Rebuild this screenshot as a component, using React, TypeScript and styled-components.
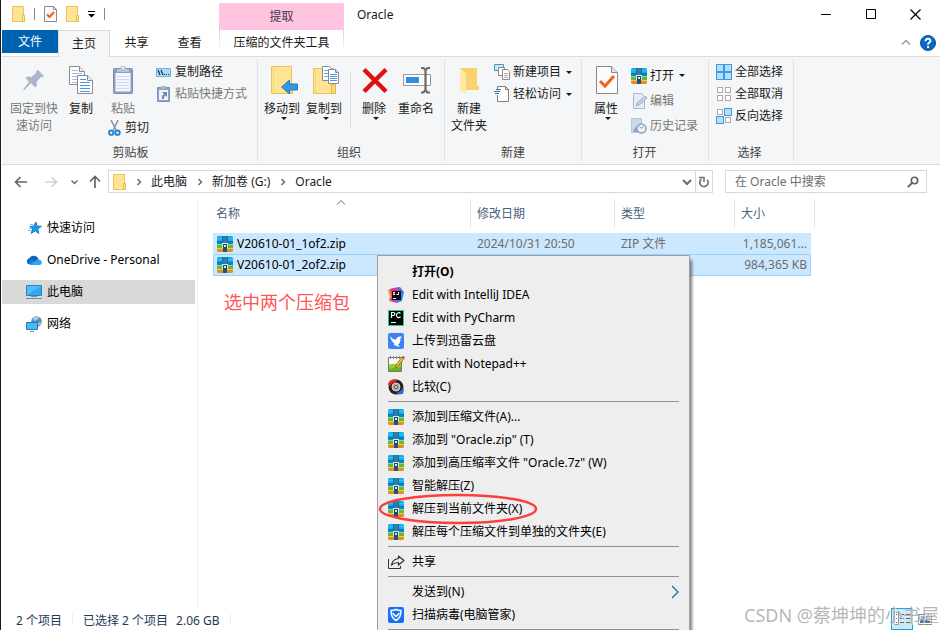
import React from "react";
import styled, { createGlobalStyle, css } from "styled-components";

const GlobalStyle = createGlobalStyle`
  * { box-sizing: border-box; }
  html, body { margin: 0; height: 100%; overflow: hidden; }
  body, button, input, table {
    font-family: "Noto Sans", "Noto Sans CJK SC", sans-serif;
    font-size: 12px;
    line-height: 16px;
    color: #1a1a1a;
  }
  button { margin: 0; padding: 0; border: 0; background: none; cursor: default; }
  svg { display: block; flex: none; }
`;

/* ---------- layout ---------- */

const Window = styled.div`
  position: relative;
  display: flex;
  flex-direction: column;
  height: 100vh;
  overflow: hidden;
  background: #fff;
  border-left: 1px solid #1c1c1c;
  padding-left: 1px;
`;

const Header = styled.header`
  display: flex;
  height: 56px;
`;

const HeaderColumn = styled.div`
  display: flex;
  flex-direction: column;
`;

const QuickAccess = styled.div`
  display: flex;
  align-items: center;
  gap: 9px;
  height: 30px;
  padding: 0 0 2px 10px;
`;

const QuickDivider = styled.span`
  width: 1px;
  height: 12px;
  background: #8a8a8a;
`;

const TabRow = styled.nav`
  display: flex;
  height: 26px;
  padding-right: 3px;
`;

const Tab = styled.button<{ $kind?: "file" | "active" }>`
  width: 53px;
  height: 26px;
  ${(p) =>
    p.$kind === "file" &&
    css`
      width: 56px;
      height: 23px;
      color: #fff;
      background: #0063b1;
    `}
  ${(p) =>
    p.$kind === "active" &&
    css`
      position: relative;
      width: 52px;
      height: 27px;
      background: #f5f6f7;
      border: 1px solid #dadbdc;
      border-bottom: 0;
    `}
`;

const ContextTab = styled.div`
  display: flex;
  flex-direction: column;
  width: 125px;
  text-align: center;
`;

const ContextTitle = styled.div`
  height: 27px;
  margin-top: 3px;
  line-height: 27px;
  background: #ffc5e0;
  color: #4a3540;
`;

const ContextButton = styled.button`
  height: 26px;
  border-left: 1px solid;
  border-right: 1px solid;
  border-image: linear-gradient(#d0d0d0, #ffffff 80%) 1;
`;

const WindowTitle = styled.div`
  flex: 1;
  height: 30px;
  line-height: 30px;
  padding-left: 13px;
`;

const Controls = styled.div`
  display: flex;
  justify-content: flex-end;
  height: 30px;
  padding-right: 2px;
`;

const ControlButton = styled.button`
  display: flex;
  align-items: center;
  justify-content: center;
  width: 45px;
  height: 28px;
`;

const HelpRow = styled.div`
  display: flex;
  align-items: center;
  justify-content: flex-end;
  gap: 9px;
  height: 26px;
  padding-right: 4px;
`;

const IconButton = styled.button`
  display: flex;
`;

const Ribbon = styled.section`
  display: flex;
  height: 109px;
  flex: none;
  background: #f5f6f7;
  border-top: 1px solid #dadbdc;
  border-bottom: 1px solid #dadbdc;
`;

const Group = styled.div<{ $left?: number; $right?: number }>`
  display: flex;
  flex-direction: column;
  margin: 2px 0 3px;
  padding: 0 ${(p) => p.$right ?? 5}px 0 ${(p) => p.$left ?? 4}px;
  border-right: 1px solid #e2e3e4;
`;

const GroupBody = styled.div`
  display: flex;
  flex: 1;
`;

const GroupLabel = styled.div`
  text-align: center;
  color: #444;
`;

const BigButton = styled.button<{ $width?: number }>`
  display: flex;
  flex-direction: column;
  align-items: center;
  align-self: flex-start;
  width: ${(p) => p.$width ?? 42}px;
  padding-top: 7px;
  line-height: 17px;
  &:disabled { color: #767676; }
  > svg:first-child { margin-bottom: 6px; }
  > svg:last-child:not(:first-child) { margin-left: 4px; }
`;

const ButtonColumn = styled.div<{ $top?: number; $width?: number }>`
  display: flex;
  flex-direction: column;
  align-items: flex-start;
  padding-top: ${(p) => p.$top ?? 2}px;
  ${(p) => p.$width && `width: ${p.$width}px;`}
`;

const SmallButton = styled.button<{ $height?: number }>`
  display: flex;
  align-items: center;
  gap: 3px;
  height: ${(p) => p.$height ?? 22}px;
  padding: 0 5px;
  white-space: nowrap;
  &:disabled { color: #767676; }
  > svg:last-child:not(:first-child) { margin-left: 2px; }
`;

const InnerDivider = styled.span`
  width: 1px;
  height: 55px;
  margin: 13px 2px 0 5px;
  background: #dcddde;
`;

const NavBar = styled.div`
  display: flex;
  align-items: center;
  height: 34px;
  flex: none;
  padding: 0 13px 1px 4px;
`;

const NavButton = styled.button<{ $width?: number }>`
  display: flex;
  justify-content: center;
  width: ${(p) => p.$width ?? 30}px;
`;

const AddressBox = styled.div`
  display: flex;
  align-items: center;
  flex: 1;
  height: 23px;
  padding-left: 4px;
  border: 1px solid #d9d9d9;
`;

const Crumb = styled.button`
  white-space: nowrap;
`;

const CrumbArrow = styled.span`
  display: flex;
  justify-content: center;
  width: 25px;
`;

const AddressEnd = styled.div`
  display: flex;
  align-items: center;
  align-self: stretch;
  gap: 3px;
  margin-left: auto;
`;

const RefreshButton = styled.button`
  display: flex;
  align-items: center;
  justify-content: center;
  align-self: stretch;
  width: 17px;
  border-left: 1px solid #d9d9d9;
`;

const SearchBox = styled.label`
  display: flex;
  align-items: center;
  width: 202px;
  height: 23px;
  margin-left: 12px;
  padding: 0 7px 0 9px;
  border: 1px solid #d9d9d9;
`;

const SearchInput = styled.input`
  flex: 1;
  min-width: 0;
  padding: 0;
  border: 0;
  outline: 0;
  background: none;
  &::placeholder { color: #6d6d6d; opacity: 1; }
`;

const Body = styled.div`
  display: flex;
  flex: 1;
  min-height: 0;
`;

const Sidebar = styled.nav`
  display: flex;
  flex-direction: column;
  gap: 8px;
  width: 196px;
  margin-top: 1px;
  padding: 16px 2px 0 0;
  border-right: 1px solid #f0f0f0;
`;

const SideItem = styled.button<{ $selected?: boolean }>`
  display: flex;
  align-items: center;
  gap: 5px;
  height: 24px;
  padding-left: 24px;
  color: #000;
  background: ${(p) => (p.$selected ? "#d9d9d9" : "transparent")};
`;

const Main = styled.main`
  flex: 1;
  padding-left: 15px;
`;

const FileTable = styled.table`
  width: 602px;
  table-layout: fixed;
  border-collapse: separate;
  border-spacing: 0;
  tbody::before {
    content: "";
    display: table-row;
    height: 5px;
  }
`;

const HeadCell = styled.th<{ $width: number; $first?: boolean; $last?: boolean }>`
  position: relative;
  width: ${(p) => p.$width}px;
  height: 29px;
  padding: 1px 0 0 ${(p) => (p.$first ? 3 : 6)}px;
  text-align: left;
  font-weight: 400;
  color: #4c607a;
  border-right: ${(p) => (p.$last ? 0 : 1)}px solid #e5e5e5;
`;

const HeadEdge = styled.th`
  width: 4px;
  padding: 0;
  border-right: 1px solid #e5e5e5;
`;

const SortMark = styled.span`
  position: absolute;
  left: 50%;
  top: -1px;
  margin-left: -6px;
`;

const FileRow = styled.tr<{ $focused?: boolean }>`
  td {
    height: 21px;
    padding: 0 6px;
    background: #cce8ff;
    color: #6d6d6d;
    white-space: nowrap;
    ${(p) =>
      p.$focused &&
      css`
        height: 22px;
        border-top: 1px solid #99d1ff;
        border-bottom: 1px solid #99d1ff;
      `}
  }
  td:first-child {
    padding-left: ${(p) => (p.$focused ? 3 : 4)}px;
    color: #000;
    ${(p) => p.$focused && "border-left: 1px solid #99d1ff;"}
  }
  td:last-child {
    padding: 0 ${(p) => (p.$focused ? 3 : 4)}px 0 0;
    text-align: right;
    ${(p) => p.$focused && "border-right: 1px solid #99d1ff;"}
  }
`;

const FileName = styled.span`
  display: flex;
  align-items: center;
  gap: 4px;
`;

const Note = styled.p`
  margin: 13px 0 0 11px;
  font-size: 18px;
  line-height: 26px;
  color: #ff5555;
`;

const StatusBar = styled.footer`
  display: flex;
  align-items: center;
  height: 22px;
  flex: none;
  padding: 0 8px 0 14px;
  color: #1e395b;
  white-space: nowrap;
`;

const StatusText = styled.span`
  padding: 3px 8px 0 0;
`;

const StatusDivider = styled.span`
  width: 1px;
  height: 11px;
  margin: 0 10px 0 2px;
  background: #ececec;
`;

const ViewButtons = styled.div`
  display: flex;
  align-items: center;
  gap: 5px;
  margin-left: auto;
`;

const ViewButton = styled.button<{ $active?: boolean }>`
  display: flex;
  align-items: center;
  justify-content: center;
  ${(p) =>
    p.$active &&
    css`
      width: 22px;
      height: 22px;
      background: #cbe8f6;
      border: 1px solid #26a0da;
    `}
`;

const Watermark = styled.div`
  position: absolute;
  right: 1px;
  bottom: 3px;
  font-size: 18px;
  line-height: 24px;
  white-space: nowrap;
  color: rgba(150, 150, 150, 0.7);
  text-shadow: 1px 1px 0 rgba(255, 255, 255, 0.7);
  pointer-events: none;
`;

const Menu = styled.div`
  position: absolute;
  left: 376px;
  top: 255px;
  width: 313px;
  padding: 4px 2px;
  background: #eeeeee;
  border: 1px solid #a0a0a0;
  box-shadow: 3px 4px 3px -1px rgba(0, 0, 0, 0.5);
`;

const MenuItem = styled.button<{ $bold?: boolean }>`
  position: relative;
  display: flex;
  align-items: center;
  gap: 8px;
  width: 100%;
  height: 23px;
  padding: 0 8px;
  color: #000;
  font-weight: ${(p) => (p.$bold ? 700 : 400)};
  white-space: nowrap;
`;

const MenuIcon = styled.span`
  width: 16px;
  height: 16px;
`;

const SubmenuMark = styled.span`
  margin-left: auto;
`;

const MenuRule = styled.hr`
  height: 1px;
  margin: 3px 8px;
  border: 0;
  background: #919191;
`;

const Ring = styled.svg`
  position: absolute;
  left: -2px;
  top: -4px;
`;

/* ---------- icons ---------- */

const ZipIcon = () => (
  <svg width="16" height="16" viewBox="0 0 16 16">
    <path d="M1 0h14l1 1v4H0V1z" fill="#14b0ee" />
    <path d="M0 2h16v1H0z" fill="#30c4f8" />
    <path d="M0 5h16v4H0z" fill="#0e86cf" />
    <path d="M0 5h16v1H0z" fill="#0c70b4" />
    <path d="M0 8h16v5H0z" fill="#5dbb3c" />
    <path d="M0 8h16v1H0z" fill="#9bd468" />
    <path d="M0 12h16v1H0z" fill="#f0c860" />
    <path d="M0 13h16v2l-1 1H1l-1-1z" fill="#e0901c" />
    <path d="M5 0h6v7H5z" fill="#1a6c9f" />
    <path d="M6 0h4v7H6z" fill="#2880ae" />
    <path d="M5 7h6v5H5z" fill="#dce8e4" />
    <path d="M6 8h4v5H6z" fill="#1d4a6c" />
    <path d="M6 13h4v3H6z" fill="#24557a" />
    <path d="M7 9h2v2H7z" fill="#d8e4e4" />
  </svg>
);

const FolderIcon = () => (
  <svg width="13" height="16" viewBox="0 0 13 16">
    <path d="M.5.5h11v9h1v6H.5z" fill="#ffe493" stroke="#e8c55a" />
    <path d="M10.500 9.500h2v6h-2z" fill="#ffe9a8" stroke="#e3bc48" />
  </svg>
);

const CheckDocIcon = () => (
  <svg width="13" height="16" viewBox="0 0 13 16">
    <path d="M.5.5h9l3 3v12H.5z" fill="#fafafa" stroke="#8c8c8c" />
    <path d="M9.500.5v3h3" fill="none" stroke="#8c8c8c" />
    <path d="M3 8.500l2.500 2.500L10 6" fill="none" stroke="#f0601d" strokeWidth="2" />
  </svg>
);

const QuickMenuIcon = () => (
  <svg width="7" height="7" viewBox="0 0 7 7">
    <path d="M0 0h7v1H0zM0 3h7L3.500 6.500z" fill="#000" />
  </svg>
);

const DownArrow = () => (
  <svg width="6" height="3" viewBox="0 0 6 3">
    <path d="M0 0h6L3 3z" fill="#1a1a1a" />
  </svg>
);

const PinIcon = () => (
  <svg width="28" height="28" viewBox="0 0 28 28">
    <path
      d="M18 4l6 6-1.500 1.500-1.500-.5-4.500 5 .5 3.500-2 2-4-4.500L4.500 24 3 23.500 9 16 5.500 12l2-1.500 4 .5 5-4.500-.3-1.500z"
      fill="#aab6ca"
    />
  </svg>
);

const PageShape = ({ x, y, tint }: { x: number; y: number; tint: string }) => (
  <g transform={`translate(${x} ${y})`}>
    <path d="M.5.5h10l5 5v13H.5z" fill="#fff" stroke="#8a8a8a" />
    <path d="M10.500.5v5h5" fill="#eee" stroke="#8a8a8a" />
    <path d="M3 4.500h6M3 7.500h10M3 10.500h10M3 13.500h10M3 16.500h10" stroke={tint} />
  </g>
);

const CopyIcon = () => (
  <svg width="26" height="28" viewBox="0 0 26 28">
    <PageShape x={1} y={0} tint="#9fbfe8" />
    <PageShape x={9} y={9} tint="#4b98ea" />
  </svg>
);

const PasteIcon = () => (
  <svg width="22" height="28" viewBox="0 0 22 28">
    <rect x="1.500" y="2.500" width="19" height="25" rx="1" fill="#8c9fc0" stroke="#7c90b2" />
    <path d="M3.500 7h15v18.500h-15z" fill="#f3f6fc" />
    <path d="M5 10.500h12M5 13.500h12M5 16.500h12M5 19.500h12M5 22.500h12" stroke="#cdd8ec" />
    <path d="M5 6V3h3l1-3h4l1 3h3v3z" fill="#b9c3d4" />
    <path d="M10 1h2v2h-2z" fill="#f5f6f7" />
  </svg>
);

const CutIcon = () => (
  <svg width="14" height="16" viewBox="0 0 14 16">
    <path d="M3 0l5 10M10 0L5.500 10" stroke="#8b99a6" strokeWidth="1.600" />
    <circle cx="3.200" cy="12.700" r="2.200" fill="none" stroke="#1c86cf" strokeWidth="1.900" />
    <circle cx="9.500" cy="12.700" r="2.200" fill="none" stroke="#1c86cf" strokeWidth="1.900" />
  </svg>
);

const CopyPathIcon = () => (
  <svg width="16" height="16" viewBox="0 0 16 16">
    <path d="M.5 4.500h14v8H.5z" fill="#a8dcf8" stroke="#74b4dc" />
    <path d="M2 6l2 5M5 6l2 5" stroke="#14304a" strokeWidth="1.200" />
    <path d="M8 10h1v1H8zM10 10h1v1h-1zM12 10h1v1h-1z" fill="#14304a" />
  </svg>
);

const PasteLinkIcon = () => (
  <svg width="16" height="16" viewBox="0 0 16 16">
    <path d="M1.500 1.500h12v14h-12z" fill="#8fa3c4" stroke="#7d92b4" />
    <path d="M3 4h9v10H3z" fill="#eef2fa" />
    <path d="M5 0h5v3H5z" fill="#aab7cd" />
    <path d="M6 6h5v5L9.500 9.500 8 11v2H6v-3l2-2z" fill="#7488ae" />
  </svg>
);

const MoveToIcon = () => (
  <svg width="32" height="28" viewBox="-4 0 32 28">
    <path d="M1.500.5h20v17h1v10h-21z" fill="#ffe493" stroke="#e8c55a" />
    <path d="M3.500 1v26" stroke="#f5d576" />
    <path d="M18.500 17.500h4v10h-4z" fill="#f8d776" stroke="#e3bc48" />
    <path d="M11.500 21l8-7v4h8v6h-8v4z" fill="#3a97e4" stroke="#1f7cc8" />
  </svg>
);

const CopyToIcon = () => (
  <svg width="32" height="28" viewBox="-4 0 32 28">
    <path d="M1.500 2.500h20v15h2v10h-22z" fill="#ffe493" stroke="#e8c55a" />
    <path d="M3.500 3v24" stroke="#f5d576" />
    <path d="M19.500 18.500h4v9h-4z" fill="#f8d776" stroke="#e3bc48" />
    <path d="M10.500.5h7l3 3v11h-10z" fill="#fff" stroke="#8a8a8a" />
    <path d="M12 4.500h5M12 7.500h5M12 10.500h5" stroke="#6caaea" />
    <path d="M16.500 3.500h7l3 3v11h-10z" fill="#fff" stroke="#8a8a8a" />
    <path d="M23.500 3.500v3h3M18 8.500h7M18 10.500h7M18 12.500h7M18 14.500h7" fill="none" stroke="#4b98ea" />
  </svg>
);

const DeleteIcon = () => (
  <svg width="30" height="28" viewBox="-2 0 30 28">
    <path d="M3 3.500l22 22M25 3.500l-22 22" stroke="#e01010" strokeWidth="4.500" />
  </svg>
);

const RenameIcon = () => (
  <svg width="30" height="28" viewBox="-2 0 30 28">
    <path d="M.5 8.500h27v11H.5z" fill="#fff" stroke="#9a9a9a" />
    <path d="M3 11h13v6H3z" fill="#2f8fe2" />
    <path d="M18 2h2.500L22.500 4l2-2H27M22.500 4v21M18 26.500h2.500l2-2.500 2 2.500H27" fill="none" stroke="#6a6a6a" strokeWidth="2.200" />
  </svg>
);

const NewFolderIcon = () => (
  <svg width="22" height="28" viewBox="0 0 22 28">
    <path d="M2 2h17v18h2v4H8z" fill="#f9cf5f" />
    <path d="M2 2l6 5v21l-6-4z" fill="#ffe9a4" />
    <path d="M8 7l9-5h2v18l-3 4H8z" fill="#f8d370" />
  </svg>
);

const NewItemIcon = () => (
  <svg width="16" height="16" viewBox="0 0 16 16">
    <path d="M.5.5h9v6h-9z" fill="#c7e7f5" stroke="#4e94b8" />
    <path d="M4.500 3.500h6v8h-6z" fill="#fff" stroke="#8a8a8a" />
    <path d="M8.500 5.500h5l2 2v8h-7z" fill="#fff" stroke="#8a8a8a" />
    <path d="M10 9.500h4M10 11.500h4M10 13.500h4" stroke="#b9a4a8" />
  </svg>
);

const EasyAccessIcon = () => (
  <svg width="16" height="16" viewBox="0 0 16 16">
    <path d="M3.500 9v6.500h11v-12l-3-3h-8V3" fill="#fff" stroke="#808080" />
    <path d="M11.500.5v3h3" fill="none" stroke="#808080" />
    <path d="M2 3.500h5M0 5.500h6M1 7.500h4" stroke="#2b6fb5" />
  </svg>
);

const PropertiesIcon = () => (
  <svg width="24" height="28" viewBox="-2 0 24 28">
    <path d="M.5.5h15l6 6v21H.5z" fill="#fcfcfc" stroke="#8a8a8a" />
    <path d="M15.500.5v6h6" fill="#e4e4e4" stroke="#8a8a8a" />
    <path d="M4 15l5 5 9-10" fill="none" stroke="#f2611c" strokeWidth="3" />
  </svg>
);

const EditIcon = () => (
  <svg width="16" height="16" viewBox="0 0 16 16">
    <path d="M2.500.5h8l3 3v12h-11z" fill="#e6edf8" stroke="#a9b9d4" />
    <path d="M5 13l1-3 8-7 2 2-8 7z" fill="#c2cee2" stroke="#a2b2ce" />
  </svg>
);

const HistoryIcon = () => (
  <svg width="16" height="16" viewBox="0 0 16 16">
    <path d="M.5.5h10v14H.5z" fill="#ccd8ec" stroke="#b7c5de" />
    <path d="M3 11l4-4 3 7H2z" fill="#91a5c8" />
    <circle cx="10.500" cy="10.500" r="4.500" fill="#eef2f9" stroke="#92a3c0" strokeWidth="1.500" />
    <path d="M8 8l2.500 2.500L13 8" fill="none" stroke="#8495b5" />
  </svg>
);

const SelectIcon = ({ on }: { on: boolean[] }) => (
  <svg width="16" height="16" viewBox="0 0 16 16">
    {on.map((active, i) => {
      const x = (i % 2) * 8;
      const y = Math.floor(i / 2) * 8;
      return active ? (
        <rect key={i} x={x + 0.5} y={y + 0.5} width="7" height="7" fill="#b5e0fb" stroke="#3a9be4" />
      ) : (
        <rect key={i} x={x + 1.5} y={y + 1.5} width="5" height="5" fill="#fff" stroke="#acacac" />
      );
    })}
  </svg>
);

const Minimize = () => (
  <svg width="10" height="10" viewBox="0 0 10 10"><path d="M0 5.500h10" stroke="#000" /></svg>
);
const Maximize = () => (
  <svg width="10" height="10" viewBox="0 0 10 10"><path d="M.5.5h9v9h-9z" fill="none" stroke="#000" /></svg>
);
const Close = () => (
  <svg width="11" height="11" viewBox="0 0 11 11"><path d="M.5.5l10 10M10.500.5l-10 10" stroke="#000" strokeWidth="1.200" /></svg>
);

type ChevronProps = { dir: "up" | "down" | "right" | "smallDown"; color?: string; weight?: number };

const chevronPaths = {
  up: "M1 6.500l4-4 4 4",
  down: "M1 3l4 4 4-4",
  smallDown: "M2.500 3.500l3 3 3-3",
  right: "M3.500 2l3 3-3 3",
};

const Chevron = ({ dir, color = "#6d6d6d", weight = 1.5 }: ChevronProps) => (
  <svg width="10" height="10" viewBox="0 0 10 10">
    <path d={chevronPaths[dir]} fill="none" stroke={color} strokeWidth={weight} />
  </svg>
);

const HelpIcon = () => (
  <svg width="16" height="16" viewBox="0 0 16 16">
    <circle cx="8" cy="8" r="7.500" fill="#0a69c7" stroke="#08509a" />
    <path d="M5.500 6.200c0-3.200 5-3.200 5-.4 0 1.900-2.500 1.700-2.500 3.900" fill="none" stroke="#fff" strokeWidth="1.900" />
    <path d="M7 11h2v2H7z" fill="#fff" />
  </svg>
);

const ArrowIcon = ({ color, turn = 0 }: { color: string; turn?: number }) => (
  <svg width="14" height="14" viewBox="0 0 14 14">
    <path d="M13 7H2M6.500 2L1.500 7l5 5" fill="none" stroke={color} strokeWidth="1.700" transform={`rotate(${turn} 7 7)`} />
  </svg>
);

const RefreshIcon = () => (
  <svg width="12" height="12" viewBox="0 0 12 12">
    <path d="M9.200 3.700A4.200 4.200 0 1 1 3.500 3" fill="none" stroke="#707070" strokeWidth="1.600" />
    <path d="M1 1.500h5V6" fill="none" stroke="#707070" strokeWidth="1.500" />
  </svg>
);

const SearchIcon = () => (
  <svg width="12" height="12" viewBox="0 0 12 12">
    <circle cx="7.500" cy="4.500" r="3.200" fill="none" stroke="#606060" strokeWidth="1.600" />
    <path d="M5 7L.8 11.200" stroke="#606060" strokeWidth="1.800" />
  </svg>
);

const StarIcon = () => (
  <svg width="16" height="16" viewBox="0 0 16 16">
    <path d="M10 2l.8 4 4.700.3-3.700 2.700 1 4.500-3.600-2.700L5.200 13.500 6.500 9 4 6.500l3.600-.3z" fill="#2196e3" stroke="#1780cc" />
    <path d="M4 4.500h3M3 8.500h2M2 10.500h3" stroke="#72bdf0" />
  </svg>
);

const CloudIcon = () => (
  <svg width="16" height="16" viewBox="0 0 16 16">
    <path d="M2 12a3.500 3.500 0 0 1 1.500-6 5 5 0 0 1 9 1.500L14 12z" fill="#0f63bd" />
    <path d="M4 13a3.500 3.500 0 0 1 0-5.500c2-1 4 .5 5 1.500z" fill="#1479d8" />
    <path d="M3 13l7-4.500c1-1.500 5-1.500 5.700 1.500.6 1.800-.7 3-2.200 3z" fill="#2ba5ee" />
  </svg>
);

const PcIcon = () => (
  <svg width="16" height="16" viewBox="0 0 16 16">
    <path d="M.5 1.500h15v10H.5z" fill="#52bdfb" stroke="#2c82b8" />
    <path d="M1 11L15 2v9z" fill="#31a8f5" />
    <path d="M5 12h6v1H5zM0 14h16v1H0z" fill="#6c8ea8" />
  </svg>
);

const NetworkIcon = () => (
  <svg width="16" height="16" viewBox="0 0 16 16">
    <circle cx="10.500" cy="5.500" r="5.300" fill="#5590b4" />
    <path d="M7 2c2-2 5-1 6 0l-2 2-3 1zM12 7l3-1c0 2-1 3-3 3z" fill="#a4cede" />
    <path d="M.5 6.500h11v7H.5z" fill="#4ab8fa" stroke="#2878ac" />
    <path d="M4 15h4v1H4z" fill="#6c8ea8" />
  </svg>
);

const IdeaIcon = () => (
  <svg width="16" height="16" viewBox="0 0 16 16">
    <path d="M0 3l5-2 4 7-5 7-3-1 1-4z" fill="#f7872a" />
    <path d="M5 1l7-1 4 5-2 9-6 2 1-8z" fill="#1e86f5" />
    <path d="M2 2l4-1 9 3-4 4-7 3z" fill="#e8368c" />
    <path d="M1 12l5-2 4 6-5-1z" fill="#c83da8" />
    <path d="M4 4h9v9H4z" fill="#120c18" />
    <path d="M5 5.500h2M6 5.500v2M5 7.500h2M10.500 5v2.500h-2M5 11.500h3" fill="none" stroke="#fff" />
  </svg>
);

const PyCharmIcon = () => (
  <svg width="16" height="16" viewBox="0 0 16 16">
    <path d="M0 0h16v16H0z" fill="#20ce88" />
    <path d="M1 1h14v14H1z" fill="#000" />
    <path d="M3.500 8V2.500H5c2.500 0 2.500 3 0 3H3.500M12.500 3.500c-1-1.300-4-1.300-4 1.700s3 3 4 1.500M3 12.500h5" fill="none" stroke="#fff" strokeWidth="1.200" />
  </svg>
);

const ThunderIcon = () => (
  <svg width="16" height="16" viewBox="0 0 16 16">
    <rect width="16" height="16" rx="2" fill="#3e82f5" />
    <path d="M2 3c2 3 4 3.500 6 3.500C9 4 11 3 14 4l-1.500 1c0 3-.5 5-2.500 7l2 1.500c-3 0-5-.5-6.500-2.500l1-.5C4 9 2.500 6 2 3z" fill="#fff" />
  </svg>
);

const NotepadIcon = () => (
  <svg width="17" height="16" viewBox="0 0 17 16">
    <path d="M.5 1.500h13v14H.5z" fill="#f5f8f0" stroke="#777" />
    <path d="M2 0h1v3H2zM5 0h1v3H5zM8 0h1v3H8zM11 0h1v3h-1z" fill="#888" />
    <path d="M1 8.500c5-1 8 0 12-2V15H1z" fill="#8ed22e" />
    <path d="M1 13l12-2v4H1z" fill="#65b61b" />
    <path d="M7 12l1-3 6-8 2 1.500-6 8z" fill="#efb936" stroke="#7c5b20" strokeWidth=".7" />
    <path d="M14 1l1-1 2 1.500-1 1z" fill="#c62929" />
  </svg>
);

const CompareIcon = () => (
  <svg width="16" height="16" viewBox="0 0 16 16">
    <circle cx="8" cy="8" r="7.500" fill="#2b2020" />
    <path d="M0 6C0 2 5-1 9 1L7 3.500C5 3 3 4 2.500 7z" fill="#e5282d" />
    <path d="M16 10l-1 5-5 .5L9 13c3 0 4-1 4.500-3z" fill="#3367d4" />
    <circle cx="8" cy="8" r="4" fill="#a8a4a0" stroke="#d8d4d0" />
    <circle cx="8" cy="8" r="1.500" fill="#f4f2ee" stroke="#5a5656" />
  </svg>
);

const ShareIcon = () => (
  <svg width="17" height="16" viewBox="0 0 17 16">
    <path d="M.5 5v9.500h12V12" fill="none" stroke="#333" />
    <path d="M10.500 2l5.500 4.500-5.500 4.500V8.500c-3 0-5 .7-7 2.500.5-3.500 3-6 7-6.500z" fill="none" stroke="#333" strokeWidth="1.200" strokeLinejoin="round" />
  </svg>
);

const ShieldIcon = () => (
  <svg width="16" height="16" viewBox="0 0 16 16">
    <rect width="16" height="16" rx="2" fill="#1470f5" />
    <path d="M8 2.500c2 1 3.500 1 5 1 0 5-1 8-5 10-4-2-5-5-5-10 1.500 0 3 0 5-1z" fill="none" stroke="#fff" strokeWidth="1.500" />
    <path d="M4.500 6L8 9.500 11.500 6" fill="none" stroke="#fff" strokeWidth="1.500" />
  </svg>
);

const SubmenuArrow = () => (
  <svg width="8" height="14" viewBox="0 0 8 14">
    <path d="M1 1l6 6-6 6" fill="none" stroke="#2b6186" strokeWidth="1.200" />
  </svg>
);

const DetailsViewIcon = () => (
  <svg width="16" height="14" viewBox="0 0 16 14">
    <path d="M.5.5h4v12h-4z" fill="#fff" stroke="#999" />
    <path d="M2 2h1v1H2zM2 10h1v1H2z" fill="#b33" />
    <path d="M2 6h1v1H2z" fill="#36c" />
    <path d="M6 2.500h4M12 2.500h4M6 6.500h4M12 6.500h4M6 10.500h4M12 10.500h4" stroke="#666" />
  </svg>
);

const LargeViewIcon = () => (
  <svg width="14" height="11" viewBox="0 0 14 11">
    <path d="M.5.5h13v10H.5z" fill="#fff" stroke="#888" />
    <path d="M2 2h10v7H2z" fill="#8bbce8" />
    <path d="M2 9V5l3 2 3-1 4 1v2z" fill="#3a5f78" />
  </svg>
);

/* ---------- data ---------- */

const files = [
  { name: "V20610-01_1of2.zip", date: "2024/10/31 20:50", type: "ZIP 文件", size: "1,185,061..." },
  { name: "V20610-01_2of2.zip", date: "2024/10/31 20:50", type: "ZIP 文件", size: "984,365 KB" },
];

const places = [
  { label: "快速访问", icon: <StarIcon /> },
  { label: "OneDrive - Personal", icon: <CloudIcon /> },
  { label: "此电脑", icon: <PcIcon />, selected: true },
  { label: "网络", icon: <NetworkIcon /> },
];

type Entry = { label: string; icon?: React.ReactNode; bold?: boolean; submenu?: boolean; ringed?: boolean };

const menuSections: Entry[][] = [
  [
    { label: "打开(O)", bold: true },
    { label: "Edit with IntelliJ IDEA", icon: <IdeaIcon /> },
    { label: "Edit with PyCharm", icon: <PyCharmIcon /> },
    { label: "上传到迅雷云盘", icon: <ThunderIcon /> },
    { label: "Edit with Notepad++", icon: <NotepadIcon /> },
    { label: "比较(C)", icon: <CompareIcon /> },
  ],
  [
    { label: "添加到压缩文件(A)...", icon: <ZipIcon /> },
    { label: '添加到 "Oracle.zip" (T)', icon: <ZipIcon /> },
    { label: '添加到高压缩率文件 "Oracle.7z" (W)', icon: <ZipIcon /> },
    { label: "智能解压(Z)", icon: <ZipIcon /> },
    { label: "解压到当前文件夹(X)", icon: <ZipIcon />, ringed: true },
    { label: "解压每个压缩文件到单独的文件夹(E)", icon: <ZipIcon /> },
  ],
  [{ label: "共享", icon: <ShareIcon /> }],
  [
    { label: "发送到(N)", submenu: true },
    { label: "扫描病毒(电脑管家)", icon: <ShieldIcon /> },
  ],
];

/* ---------- page ---------- */

const ContextMenu = () => (
  <Menu role="menu">
    {menuSections.map((section, i) => (
      <React.Fragment key={i}>
        {section.map((entry) => (
          <MenuItem key={entry.label} role="menuitem" $bold={entry.bold}>
            <MenuIcon>{entry.icon}</MenuIcon>
            {entry.label}
            {entry.submenu && <SubmenuMark><SubmenuArrow /></SubmenuMark>}
            {entry.ringed && (
              <Ring width="160" height="32" viewBox="0 0 160 32">
                <ellipse cx="80" cy="16" rx="78" ry="14" fill="none" stroke="#f9403c" strokeWidth="2.500" />
              </Ring>
            )}
          </MenuItem>
        ))}
        <MenuRule />
      </React.Fragment>
    ))}
  </Menu>
);

const App = () => (
  <>
    <GlobalStyle />
    <Window>
      <Header>
        <HeaderColumn>
          <QuickAccess>
            <FolderIcon />
            <QuickDivider />
            <CheckDocIcon />
            <FolderIcon />
            <QuickMenuIcon />
            <QuickDivider />
          </QuickAccess>
          <TabRow>
            <Tab $kind="file">文件</Tab>
            <Tab $kind="active">主页</Tab>
            <Tab>共享</Tab>
            <Tab>查看</Tab>
          </TabRow>
        </HeaderColumn>
        <ContextTab>
          <ContextTitle>提取</ContextTitle>
          <ContextButton>压缩的文件夹工具</ContextButton>
        </ContextTab>
        <WindowTitle>Oracle</WindowTitle>
        <HeaderColumn>
          <Controls>
            <ControlButton aria-label="最小化"><Minimize /></ControlButton>
            <ControlButton aria-label="最大化"><Maximize /></ControlButton>
            <ControlButton aria-label="关闭"><Close /></ControlButton>
          </Controls>
          <HelpRow>
            <IconButton aria-label="收起功能区"><Chevron dir="up" color="#9a9a9a" /></IconButton>
            <IconButton aria-label="帮助"><HelpIcon /></IconButton>
          </HelpRow>
        </HeaderColumn>
      </Header>

      <Ribbon>
        <Group $left={7}>
          <GroupBody>
            <BigButton $width={50} disabled><PinIcon />固定到快<br />速访问</BigButton>
            <BigButton $width={44}><CopyIcon />复制</BigButton>
            <ButtonColumn $top={0} $width={48}>
              <BigButton $width={40} disabled><PasteIcon />粘贴</BigButton>
              <SmallButton><CutIcon />剪切</SmallButton>
            </ButtonColumn>
            <ButtonColumn>
              <SmallButton><CopyPathIcon />复制路径</SmallButton>
              <SmallButton disabled><PasteLinkIcon />粘贴快捷方式</SmallButton>
            </ButtonColumn>
          </GroupBody>
          <GroupLabel>剪贴板</GroupLabel>
        </Group>
        <Group $left={3} $right={7}>
          <GroupBody>
            <BigButton><MoveToIcon />移动到<DownArrow /></BigButton>
            <BigButton><CopyToIcon />复制到<DownArrow /></BigButton>
            <InnerDivider />
            <BigButton><DeleteIcon />删除<DownArrow /></BigButton>
            <BigButton><RenameIcon />重命名</BigButton>
          </GroupBody>
          <GroupLabel>组织</GroupLabel>
        </Group>
        <Group $right={4}>
          <GroupBody>
            <BigButton $width={40}><NewFolderIcon />新建<br />文件夹</BigButton>
            <ButtonColumn>
              <SmallButton><NewItemIcon />新建项目<DownArrow /></SmallButton>
              <SmallButton><EasyAccessIcon />轻松访问<DownArrow /></SmallButton>
            </ButtonColumn>
          </GroupBody>
          <GroupLabel>新建</GroupLabel>
        </Group>
        <Group>
          <GroupBody>
            <BigButton $width={40}><PropertiesIcon />属性<DownArrow /></BigButton>
            <ButtonColumn $top={4}>
              <SmallButton $height={25}><ZipIcon />打开<DownArrow /></SmallButton>
              <SmallButton $height={25} disabled><EditIcon />编辑</SmallButton>
              <SmallButton $height={25} disabled><HistoryIcon />历史记录</SmallButton>
            </ButtonColumn>
          </GroupBody>
          <GroupLabel>打开</GroupLabel>
        </Group>
        <Group $left={2}>
          <GroupBody>
            <ButtonColumn>
              <SmallButton><SelectIcon on={[true, true, true, true]} />全部选择</SmallButton>
              <SmallButton><SelectIcon on={[false, false, false, false]} />全部取消</SmallButton>
              <SmallButton><SelectIcon on={[false, true, true, false]} />反向选择</SmallButton>
            </ButtonColumn>
          </GroupBody>
          <GroupLabel>选择</GroupLabel>
        </Group>
      </Ribbon>

      <NavBar>
        <NavButton aria-label="后退"><ArrowIcon color="#666" /></NavButton>
        <NavButton aria-label="前进"><ArrowIcon color="#d2d2d2" turn={180} /></NavButton>
        <NavButton $width={16} aria-label="最近位置"><Chevron dir="smallDown" /></NavButton>
        <NavButton $width={26} aria-label="上移"><ArrowIcon color="#666" turn={90} /></NavButton>
        <AddressBox>
          <FolderIcon />
          <CrumbArrow><Chevron dir="right" /></CrumbArrow>
          <Crumb>此电脑</Crumb>
          <CrumbArrow><Chevron dir="right" /></CrumbArrow>
          <Crumb>新加卷 (G:)</Crumb>
          <CrumbArrow><Chevron dir="right" /></CrumbArrow>
          <Crumb>Oracle</Crumb>
          <AddressEnd>
            <IconButton aria-label="地址列表"><Chevron dir="down" weight={2} /></IconButton>
            <RefreshButton aria-label="刷新"><RefreshIcon /></RefreshButton>
          </AddressEnd>
        </AddressBox>
        <SearchBox>
          <SearchInput type="text" placeholder="在 Oracle 中搜索" aria-label="在 Oracle 中搜索" />
          <SearchIcon />
        </SearchBox>
      </NavBar>

      <Body>
        <Sidebar>
          {places.map((place) => (
            <SideItem key={place.label} $selected={place.selected}>
              {place.icon}
              {place.label}
            </SideItem>
          ))}
        </Sidebar>
        <Main>
          <FileTable>
            <thead>
              <tr>
                <HeadCell $width={258} $first>
                  名称
                  <SortMark><Chevron dir="up" weight={1} /></SortMark>
                </HeadCell>
                <HeadCell $width={144}>修改日期</HeadCell>
                <HeadCell $width={120}>类型</HeadCell>
                <HeadCell $width={76} $last>大小</HeadCell>
                <HeadEdge />
              </tr>
            </thead>
            <tbody>
              {files.map((file, i) => (
                <FileRow key={file.name} $focused={i === 1}>
                  <td><FileName><ZipIcon />{file.name}</FileName></td>
                  <td>{file.date}</td>
                  <td>{file.type}</td>
                  <td>{file.size}</td>
                </FileRow>
              ))}
            </tbody>
          </FileTable>
          <Note>选中两个压缩包</Note>
        </Main>
      </Body>

      <StatusBar>
        <StatusText>2 个项目</StatusText>
        <StatusDivider />
        <StatusText>已选择 2 个项目</StatusText>
        <StatusText>2.06 GB</StatusText>
        <StatusDivider />
        <ViewButtons>
          <ViewButton $active aria-label="详细信息"><DetailsViewIcon /></ViewButton>
          <ViewButton aria-label="大图标"><LargeViewIcon /></ViewButton>
        </ViewButtons>
      </StatusBar>

      <ContextMenu />
      <Watermark>CSDN @蔡坤坤的小书屋</Watermark>
    </Window>
  </>
);

export default App;
